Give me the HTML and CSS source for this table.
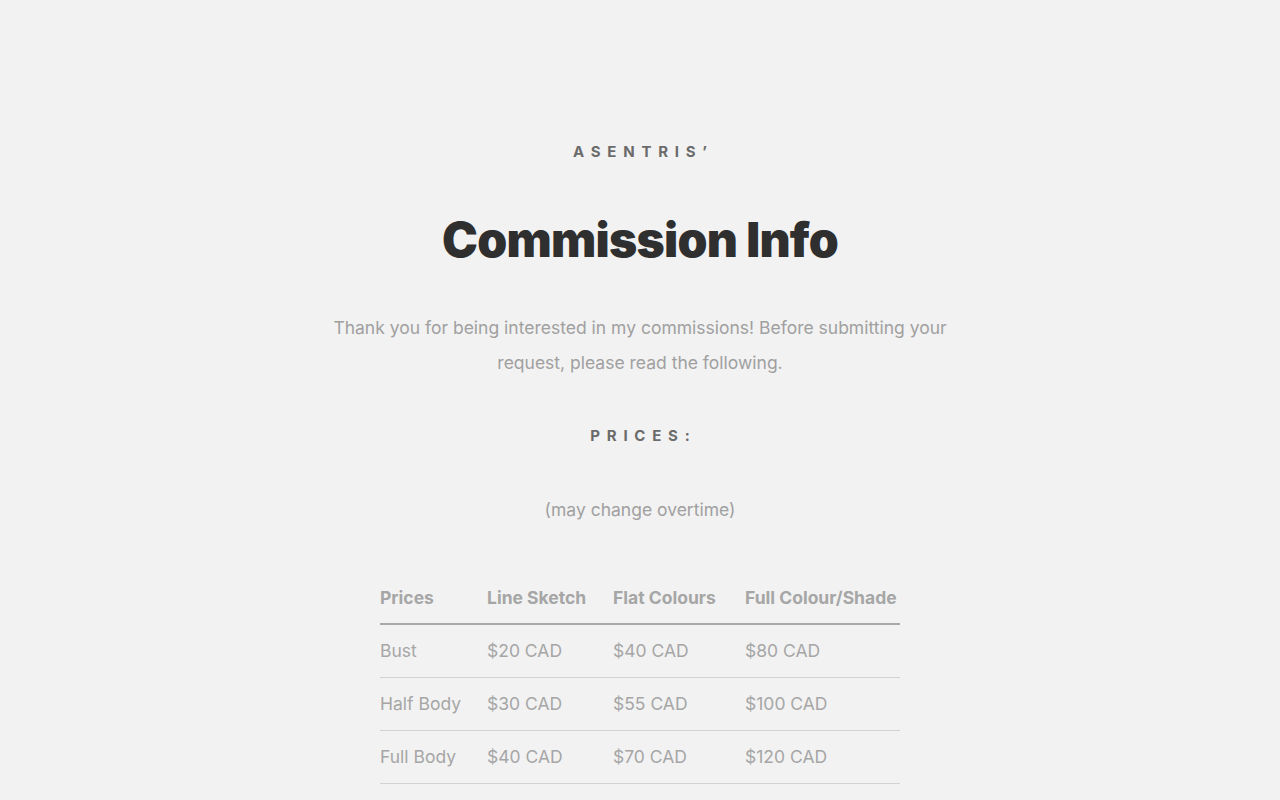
FILE: index.html
```html
<!DOCTYPE html>
<html lang="en">
<head>
<meta charset="utf-8">
<title>Commission Info</title>
<link rel="stylesheet" href="styles.css">
</head>
<body>
<main class="page">
  <p class="eyebrow">Asentris’</p>
  <h1 class="title">Commission Info</h1>
  <p class="intro">Thank you for being interested in my commissions! Before submitting your request, please read the following.</p>
  <h2 class="section">Prices:</h2>
  <p class="note">(may change overtime)</p>
  <table class="prices">
    <thead>
      <tr><th>Prices</th><th>Line Sketch</th><th>Flat Colours</th><th>Full Colour/Shade</th></tr>
    </thead>
    <tbody>
      <tr><td>Bust</td><td>$20 CAD</td><td>$40 CAD</td><td>$80 CAD</td></tr>
      <tr><td>Half Body</td><td>$30 CAD</td><td>$55 CAD</td><td>$100 CAD</td></tr>
      <tr><td>Full Body</td><td>$40 CAD</td><td>$70 CAD</td><td>$120 CAD</td></tr>
    </tbody>
  </table>
</main>
</body>
</html>
```

FILE: styles.css
```css
html, body {
  margin: 0;
  padding: 0;
  background: #f2f2f2;
}
body {
  font-family: Inter, "Noto Sans", sans-serif;
  color: #a3a3a3;
}
.page {
  width: 660px;
  margin: 0 auto;
  padding-top: 142px;
  display: flex;
  flex-direction: column;
  align-items: center;
  text-align: center;
}
.eyebrow {
  margin: 0;
  font-size: 15px;
  line-height: 20px;
  font-weight: 700;
  letter-spacing: 0.45em;
  text-transform: uppercase;
  color: #6b6b6b;
  padding-left: 0.45em;
}
.title {
  margin: 46px 0 0;
  font-size: 48px;
  line-height: 64px;
  font-weight: 900;
  letter-spacing: -0.015em;
  color: #2f2f2f;
}
.intro {
  margin: 38px 0 0;
  font-size: 17.5px;
  line-height: 35px;
  font-weight: 400;
  color: #a0a0a0;
}
.section {
  margin: 46px 0 0;
  font-size: 15px;
  line-height: 20px;
  font-weight: 700;
  letter-spacing: 0.45em;
  text-transform: uppercase;
  color: #6b6b6b;
  padding-left: 0.45em;
}
.note {
  margin: 54px 0 0;
  font-size: 17.5px;
  line-height: 20px;
  color: #a0a0a0;
}
.prices {
  margin-top: 67px;
  width: 520px;
  border-collapse: collapse;
  text-align: left;
  font-size: 17.5px;
}
.prices th {
  font-weight: 700;
  color: #a6a6a6;
  padding: 0 0 14px;
  line-height: 22px;
  border-bottom: 2px solid #a9a9a9;
}
.prices td {
  padding: 15px 0;
  line-height: 22px;
  border-bottom: 1px solid #d2d2d2;
  color: #a6a6a6;
}
.prices th:nth-child(1), .prices td:nth-child(1) { width: 107px; }
.prices th:nth-child(2), .prices td:nth-child(2) { width: 126px; }
.prices th:nth-child(3), .prices td:nth-child(3) { width: 132px; }
```
